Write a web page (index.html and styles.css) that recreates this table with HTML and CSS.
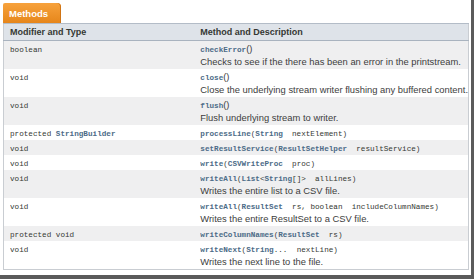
FILE: index.html
```html
<!DOCTYPE html>
<html>
<head>
<meta charset="utf-8">
<link rel="stylesheet" href="styles.css">
</head>
<body>
<div class="screen">
  <div class="caption"><span class="tab">Methods</span></div>
  <table class="summary">
    <thead>
      <tr><th class="col-type">Modifier and Type</th><th class="col-desc">Method and Description</th></tr>
    </thead>
    <tbody>
      <tr class="alt">
        <td class="type"><div class="sig"><code>boolean</code></div></td>
        <td class="desc"><div class="sig"><code><b class="m">checkError</b></code>()</div><div class="block">Checks to see if the there has been an error in the printstream.</div></td>
      </tr>
      <tr>
        <td class="type"><div class="sig"><code>void</code></div></td>
        <td class="desc"><div class="sig"><code><b class="m">close</b></code>()</div><div class="block">Close the underlying stream writer flushing any buffered content.</div></td>
      </tr>
      <tr class="alt">
        <td class="type"><div class="sig"><code>void</code></div></td>
        <td class="desc"><div class="sig"><code><b class="m">flush</b></code>()</div><div class="block">Flush underlying stream to writer.</div></td>
      </tr>
      <tr>
        <td class="type"><div class="sig"><code>protected <span class="link">StringBuilder</span></code></div></td>
        <td class="desc"><div class="sig"><code><b class="m">processLine</b>(<span class="link">String</span>&nbsp; nextElement)</code></div></td>
      </tr>
      <tr class="alt">
        <td class="type"><div class="sig"><code>void</code></div></td>
        <td class="desc"><div class="sig"><code><b class="m">setResultService</b>(<span class="link">ResultSetHelper</span>&nbsp; resultService)</code></div></td>
      </tr>
      <tr>
        <td class="type"><div class="sig"><code>void</code></div></td>
        <td class="desc"><div class="sig"><code><b class="m">write</b>(<span class="link">CSVWriteProc</span>&nbsp; proc)</code></div></td>
      </tr>
      <tr class="alt">
        <td class="type"><div class="sig"><code>void</code></div></td>
        <td class="desc"><div class="sig"><code><b class="m">writeAll</b>(<span class="link">List</span>&lt;<span class="link">String</span>[]&gt;&nbsp; allLines)</code></div><div class="block">Writes the entire list to a CSV file.</div></td>
      </tr>
      <tr>
        <td class="type"><div class="sig"><code>void</code></div></td>
        <td class="desc"><div class="sig"><code><b class="m">writeAll</b>(<span class="link">ResultSet</span>&nbsp; rs, boolean&nbsp; includeColumnNames)</code></div><div class="block">Writes the entire ResultSet to a CSV file.</div></td>
      </tr>
      <tr class="alt">
        <td class="type"><div class="sig"><code>protected void</code></div></td>
        <td class="desc"><div class="sig"><code><b class="m">writeColumnNames</b>(<span class="link">ResultSet</span>&nbsp; rs)</code></div></td>
      </tr>
      <tr>
        <td class="type"><div class="sig"><code>void</code></div></td>
        <td class="desc"><div class="sig"><code><b class="m">writeNext</b>(<span class="link">String</span>...&nbsp; nextLine)</code></div><div class="block">Writes the next line to the file.</div></td>
      </tr>
    </tbody>
  </table>
</div>
</body>
</html>
```

FILE: styles.css
```css
html, body {
  margin: 0;
  padding: 0;
  background: #5b5b5b;
  height: 279px;
  overflow: hidden;
}
.screen {
  width: 468px;
  height: 272px;
  background: #ffffff;
  padding: 3px 0 0 3px;
  font-family: "Liberation Sans", Arial, sans-serif;
  color: #3d3d3d;
}
.caption {
  display: flex;
  height: 20px;
}
.tab {
  display: flex;
  align-items: center;
  width: 58px;
  padding-left: 6px;
  height: 20px;
  box-sizing: border-box;
  background: linear-gradient(#f7a23c, #e6861b);
  border-radius: 2px 4px 0 0;
  box-shadow: inset -1px 0 0 #d07414;
  color: #ffffff;
  font-weight: bold;
  font-size: 9.5px;
}
.summary {
  width: 466px;
  border-collapse: collapse;
  border: 1px solid #c9cdd2;
  border-top: none;
  font-size: 9.4px;
}
.summary th {
  background: #dee3e9;
  border-top: 1px solid #b3bcc7;
  border-bottom: 1px solid #a9b3bf;
  text-align: left;
  font-weight: bold;
  font-size: 9px;
  height: 16px;
  padding: 0;
  line-height: 16px;
  color: #353833;
}
.col-type {
  width: 186px;
  padding-left: 6px !important;
}
.col-desc {
  padding-left: 5px !important;
}
.summary td {
  vertical-align: top;
  padding: 2px 0 1px 0;
}
.summary td.type {
  padding-left: 6px;
}
.summary td.desc {
  padding-left: 5px;
  white-space: nowrap;
}
.sig {
  height: 12px;
  line-height: 12px;
  overflow: hidden;
}
.block {
  height: 13px;
  line-height: 13px;
}
tr.alt td {
  background: #efeff0;
}
code {
  font-family: "Liberation Mono", "Courier New", monospace;
  font-size: 7.65px;
  color: #353833;
}
.m {
  color: #4c6b87;
  font-weight: bold;
}
.link {
  color: #4c6b87;
  font-weight: bold;
}
```
